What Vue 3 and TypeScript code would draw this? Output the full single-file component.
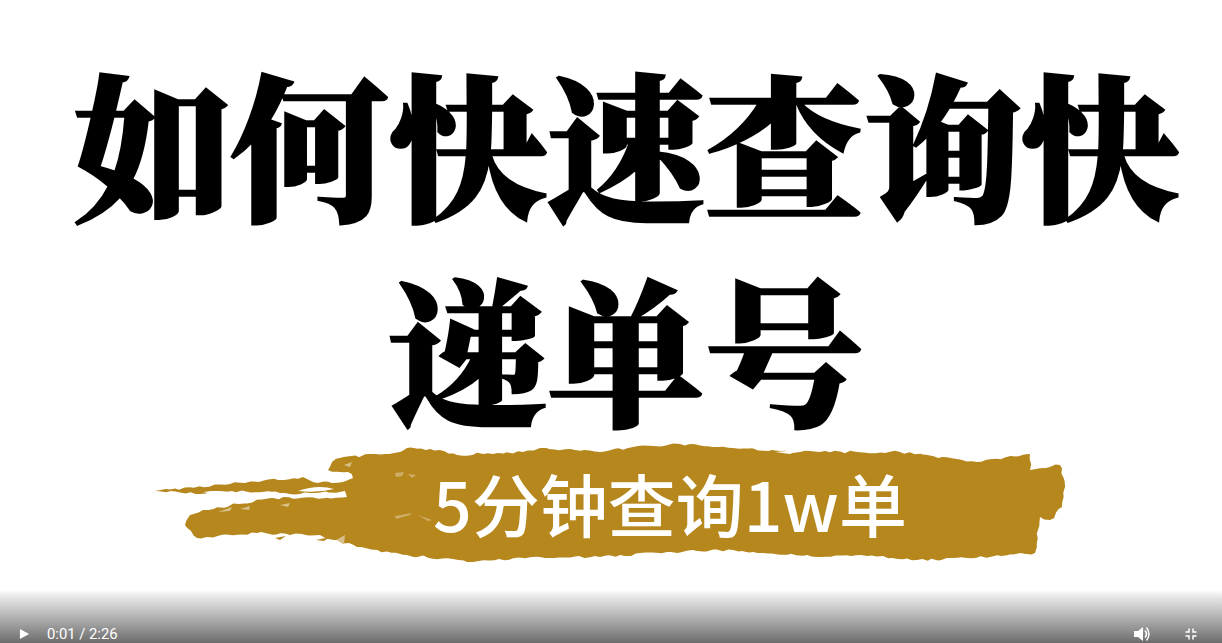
<script setup lang="ts">
type Pt = [number, number]

const outline: Pt[] = [
  [155, 491], [230, 484], [303, 477], [313, 482], [343, 482], [353, 478], [348, 472], [328, 470], [332, 462],
  [340, 458], [400, 452], [407, 448], [440, 450], [457, 455], [523, 452], [540, 448], [600, 452], [633, 447],
  [680, 444], [733, 448], [800, 452], [900, 452], [977, 462], [1030, 454], [1030, 470], [1060, 465], [1065, 487],
  [1062, 507], [1050, 520], [1040, 517], [1035, 553], [967, 558], [917, 560], [867, 556], [817, 557], [733, 550],
  [667, 552], [600, 557], [540, 557], [473, 562], [407, 555], [357, 547], [320, 535], [257, 533], [207, 537],
  [197, 538], [185, 525], [190, 515], [203, 510], [273, 498], [347, 497], [345, 491], [300, 494], [262, 492],
  [215, 491], [200, 494]
]

// Seeded jitter gives the painted stroke its rough edge, and stays the same on every render.
let seed = 17
const next = (): number => {
  seed = (seed * 9301 + 49297) % 233280
  return seed / 233280
}

const brushPath = outline
  .flatMap((p, i) => {
    const q = outline[(i + 1) % outline.length]
    const steps = Math.max(1, Math.round(Math.hypot(q[0] - p[0], q[1] - p[1]) / 5))
    const pts: Pt[] = []
    for (let s = 0; s < steps; s++) {
      const t = s / steps
      const j = s === 0 ? 0 : 2.6
      pts.push([p[0] + (q[0] - p[0]) * t + (next() - 0.5) * j, p[1] + (q[1] - p[1]) * t + (next() - 0.5) * j])
    }
    return pts
  })
  .map((p, i) => `${i ? 'L' : 'M'}${p[0].toFixed(1)} ${p[1].toFixed(1)}`)
  .join(' ') + ' Z'
</script>

<template>
  <div class="video">
    <svg class="brush" viewBox="0 0 1222 643" aria-hidden="true">
      <path :d="brushPath" fill="#b5871c" />
      <path d="M203 492 Q222 489 240 494 Q222 497 203 492 Z M298 491 Q318 484 334 489 Q318 493 298 491 Z" fill="#fff" />
      <path d="M733 446 L790 445 L815 449 L780 451 Z M775 452 L800 450 L790 454 Z" fill="#fff" />
      <path d="M275 538 L286 536 L280 540 Z M316 540 L330 537 L324 541 Z" fill="#b5871c" />
      <path d="M395 473 L404 472 L402 476 L396 477 Z M408 474 L416 475 L412 478 Z M395 516 L412 513 L410 515 L396 519 Z M418 515 L432 520 L428 521 Z" fill="#cdae6a" />
      <path d="M218 512 L232 507 L230 511 Z M240 509 L250 506 L249 510 Z M280 505 L290 503 L288 507 Z M336 540 L345 535 L344 544 Z M344 465 L352 462 L350 467 Z" fill="#d8c08a" />
    </svg>

    <h1 class="title">
      <span class="line">如何快速查询快</span>
      <span class="line">递单号</span>
    </h1>

    <div class="slogan">5分钟查询1w单</div>

    <div class="controls">
      <svg class="play" viewBox="0 0 12 12" aria-hidden="true"><path d="M1 0.5 L11 6 L1 11.5 Z" fill="#fff" /></svg>
      <span class="time">0:01 / 2:26</span>
      <span class="spacer"></span>
      <svg class="volume" viewBox="0 0 18 16" aria-hidden="true">
        <path d="M1 5 H5 L10 1 V15 L5 11 H1 Z" fill="#fff" />
        <path d="M12 4.5 Q15 8 12 11.5" fill="none" stroke="#fff" stroke-width="1.6" />
        <path d="M13.5 1.5 Q18.5 8 13.5 14.5" fill="none" stroke="#fff" stroke-width="1.4" />
      </svg>
      <svg class="exit" viewBox="0 0 12 12" aria-hidden="true">
        <path d="M4 0.5 V4 H0.5 M8 0.5 V4 H11.5 M4 11.5 V8 H0.5 M8 11.5 V8 H11.5" fill="none" stroke="#fff" stroke-width="1.5" />
      </svg>
    </div>
  </div>
</template>

<style>
html, body { margin: 0; background: #fff; }
</style>

<style scoped>
.video {
  position: relative;
  width: 1222px;
  height: 643px;
  overflow: hidden;
  background: #fff;
  display: flex;
  flex-direction: column;
  align-items: center;
  padding-top: 38px;
  box-sizing: border-box;
}
.brush {
  position: absolute;
  inset: 0;
  width: 1222px;
  height: 643px;
}
.title {
  position: relative;
  margin: 0;
  padding-left: 30px;
  display: flex;
  flex-direction: column;
  align-items: center;
  font-family: "Noto Serif CJK SC", "Noto Sans CJK SC", serif;
  font-size: 158px;
  font-weight: 900;
  line-height: 205px;
  color: #000;
  -webkit-text-stroke: 2.5px #000;
  white-space: nowrap;
}
.line { display: block; }
.slogan {
  position: relative;
  margin-left: 118px;
  height: 106px;
  line-height: 110px;
  font-family: "Noto Sans CJK SC", sans-serif;
  font-size: 68px;
  font-weight: 500;
  color: #fff;
  white-space: nowrap;
}
.controls {
  position: absolute;
  left: 0;
  right: 0;
  bottom: 0;
  height: 53px;
  box-sizing: border-box;
  padding: 0 25px 0 19px;
  display: flex;
  align-items: flex-end;
  background: linear-gradient(to bottom, #ffffff 0%, #e4e4e4 15%, #b4b4b4 50%, #6c6c6c 100%);
}
.play { width: 11px; height: 12px; margin-bottom: 3px; }
.time {
  margin-left: 17px;
  font-family: Roboto, "Liberation Sans", sans-serif;
  font-size: 14.8px;
  line-height: 18px;
  color: #fff;
}
.spacer { flex: 1; }
.volume { width: 18px; height: 16px; margin-bottom: 1px; }
.exit { width: 12px; height: 12px; margin-left: 34px; margin-bottom: 3px; }
</style>
